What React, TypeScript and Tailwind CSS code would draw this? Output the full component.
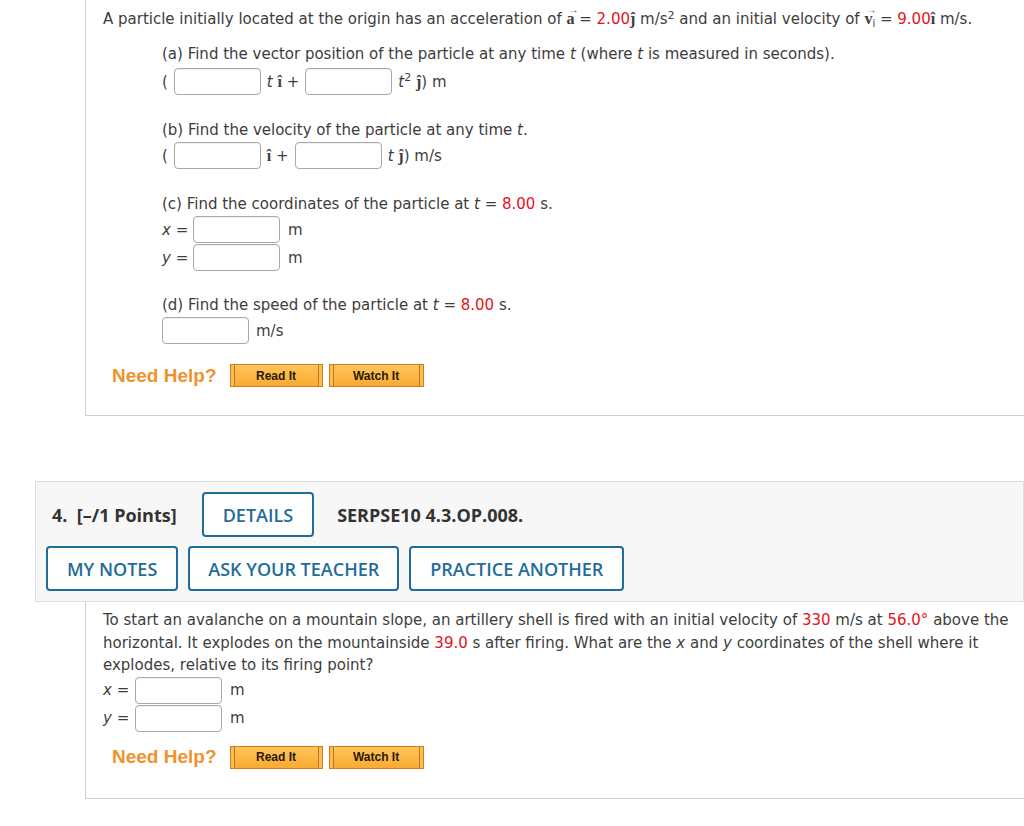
import React from 'react';

const red = 'text-[#e4121b]';

function Vec({ ch }: { ch: string }) {
  return (
    <span className="relative inline-block font-['Liberation_Serif',serif] text-[16px] font-bold">
      {ch}
      <span className="absolute left-[2px] top-[-9px] text-[10px] font-normal">→</span>
    </span>
  );
}

function Hat({ ch }: { ch: string }) {
  return <span className="font-['Liberation_Serif',serif] text-[16px] font-bold">{ch}</span>;
}

function Sup({ children }: { children: React.ReactNode }) {
  return <sup className="text-[11px] leading-none">{children}</sup>;
}

function Box() {
  return (
    <span className="inline-block w-[87px] h-[27px] align-middle rounded-[4px] border border-[#a8a8a8] bg-white shadow-[inset_0_1px_1px_rgba(0,0,0,0.06)]" />
  );
}

function OrangeBtn({ label, w }: { label: string; w: string }) {
  return (
    <span
      className={`inline-flex items-center justify-center ${w} h-[23px] border border-[#cf7d23] bg-gradient-to-b from-[#ffc55a] to-[#f9aa30] shadow-[inset_3px_0_0_#fbbd4f,inset_4px_0_0_#c37522,inset_-3px_0_0_#fbbd4f,inset_-4px_0_0_#c37522] font-['Liberation_Sans',sans-serif] text-[12px] font-bold text-[#2a1a05]`}
    >
      {label}
    </span>
  );
}

function NeedHelp() {
  return (
    <div className="flex items-center gap-[13px] pl-[9px]">
      <span className="font-['Liberation_Sans',sans-serif] text-[19px] font-bold text-[#f0922c]">Need Help?</span>
      <div className="flex gap-[6px]">
        <OrangeBtn label="Read It" w="w-[93px]" />
        <OrangeBtn label="Watch It" w="w-[95px]" />
      </div>
    </div>
  );
}

function BlueBtn({ children, px = 'px-[19px]' }: { children: React.ReactNode; px?: string }) {
  return (
    <span
      className={`inline-flex items-center h-[45px] ${px} rounded-[4px] border-2 border-[#1f6d98] text-[#1f6d98] bg-white text-[18px] font-semibold whitespace-nowrap`}
    >
      {children}
    </span>
  );
}

function Coord({ v, w }: { v: string; w: string }) {
  return (
    <div className="flex items-center gap-[7px]">
      <span className={`${w} whitespace-nowrap`}>
        <i>{v}</i> =
      </span>
      <Box />
      <span className="ml-[1px]">m</span>
    </div>
  );
}

export default function App() {
  return (
    <div className="min-h-[826px] bg-white text-[#3d3d3d] font-['DejaVu_Sans',sans-serif] text-[15px] leading-[22px]">
      {/* question 3 */}
      <div className="ml-[85px] border-l border-b border-[#cfcfcf] pl-[17px] pt-[8px] pb-[28px]">
        <p className="whitespace-nowrap">
          A particle initially located at the origin has an acceleration of <Vec ch="a" /> = <span className={red}>2.00</span>
          <Hat ch="ĵ" /> m/s<Sup>2</Sup> and an initial velocity of <Vec ch="v" />
          <sub className="text-[10px] leading-none">i</sub> = <span className={red}>9.00</span>
          <Hat ch="î" /> m/s.
        </p>

        <div className="pl-[59px]">
          <p className="mt-[13px]">
            (a) Find the vector position of the particle at any time <i>t</i> (where <i>t</i> is measured in seconds).
          </p>
          <div className="mt-[3px] flex items-center gap-[6px]">
            <span>(</span>
            <Box />
            <span>
              <i>t</i> <Hat ch="î" /> +
            </span>
            <Box />
            <span>
              <i>t</i>
              <Sup>2</Sup> <Hat ch="ĵ" />) m
            </span>
          </div>

          <p className="mt-[24px]">
            (b) Find the velocity of the particle at any time <i>t</i>.
          </p>
          <div className="mt-[1px] flex items-center gap-[6px]">
            <span>(</span>
            <Box />
            <span>
              <Hat ch="î" /> +
            </span>
            <Box />
            <span>
              <i>t</i> <Hat ch="ĵ" />) m/s
            </span>
          </div>

          <p className="mt-[24px]">
            (c) Find the coordinates of the particle at <i>t</i> = <span className={red}>8.00</span> s.
          </p>
          <div className="mt-[1px] flex flex-col gap-[1px]">
            <Coord v="x" w="w-[24px]" />
            <Coord v="y" w="w-[24px]" />
          </div>

          <p className="mt-[23px]">
            (d) Find the speed of the particle at <i>t</i> = <span className={red}>8.00</span> s.
          </p>
          <div className="mt-[1px] flex items-center gap-[7px]">
            <Box />
            <span>m/s</span>
          </div>
        </div>

        <div className="mt-[20px]">
          <NeedHelp />
        </div>
      </div>

      {/* question 4 header */}
      <div className="mt-[65px] ml-[35px] bg-[#f7f7f7] border border-[#dedede] px-[10px] pt-[10px] pb-[10px] font-['Open_Sans',sans-serif]">
        <div className="flex items-center pl-[6px]">
          <span className="text-[18px] font-bold text-[#333]">4.&nbsp; [–/1 Points]</span>
          <span className="ml-[25px]">
            <BlueBtn>DETAILS</BlueBtn>
          </span>
          <span className="ml-[23px] text-[18px] font-bold text-[#333]">SERPSE10 4.3.OP.008.</span>
        </div>
        <div className="mt-[9px] flex gap-[10px]">
          <BlueBtn>MY NOTES</BlueBtn>
          <BlueBtn px="px-[18px]">ASK YOUR TEACHER</BlueBtn>
          <BlueBtn>PRACTICE ANOTHER</BlueBtn>
        </div>
      </div>

      {/* question 4 body */}
      <div className="ml-[85px] border-l border-b border-[#cfcfcf] pl-[17px] pt-[7px] pb-[29px]">
        <p className="leading-[22.5px] whitespace-nowrap">
          To start an avalanche on a mountain slope, an artillery shell is fired with an initial velocity of{' '}
          <span className={red}>330</span> m/s at <span className={red}>56.0°</span> above the
          <br />
          horizontal. It explodes on the mountainside <span className={red}>39.0</span> s after firing. What are the{' '}
          <i>x</i> and <i>y</i> coordinates of the shell where it
          <br />
          explodes, relative to its firing point?
        </p>
        <div className="flex flex-col gap-[1px]">
          <Coord v="x" w="w-[25px]" />
          <Coord v="y" w="w-[25px]" />
        </div>
        <div className="mt-[14px]">
          <NeedHelp />
        </div>
      </div>
    </div>
  );
}
